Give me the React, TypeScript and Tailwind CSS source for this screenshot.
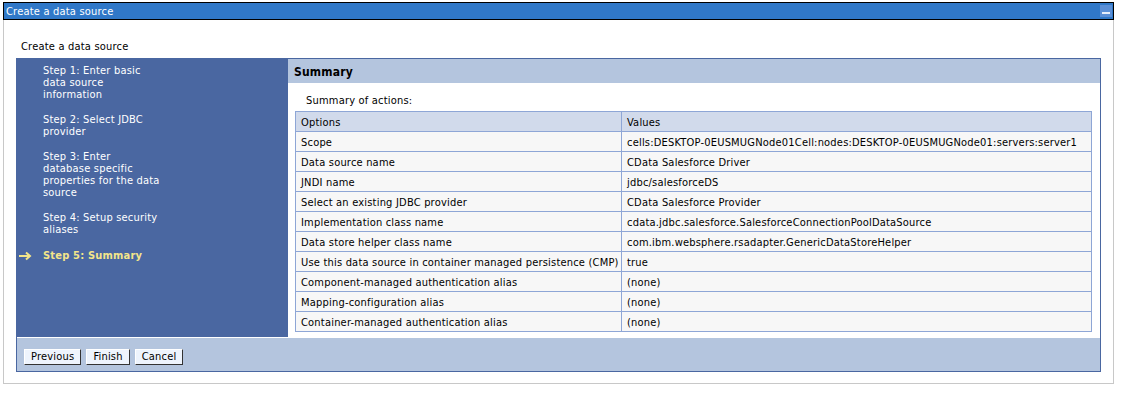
import React from "react";

const rows: [string, string][] = [
  ["Scope", "cells:DESKTOP-0EUSMUGNode01Cell:nodes:DESKTOP-0EUSMUGNode01:servers:server1"],
  ["Data source name", "CData Salesforce Driver"],
  ["JNDI name", "jdbc/salesforceDS"],
  ["Select an existing JDBC provider", "CData Salesforce Provider"],
  ["Implementation class name", "cdata.jdbc.salesforce.SalesforceConnectionPoolDataSource"],
  ["Data store helper class name", "com.ibm.websphere.rsadapter.GenericDataStoreHelper"],
  ["Use this data source in container managed persistence (CMP)", "true"],
  ["Component-managed authentication alias", "(none)"],
  ["Mapping-configuration alias", "(none)"],
  ["Container-managed authentication alias", "(none)"],
];

const steps: string[][] = [
  ["Step 1: Enter basic", "data source", "information"],
  ["Step 2: Select JDBC", "provider"],
  ["Step 3: Enter", "database specific", "properties for the data", "source"],
  ["Step 4: Setup security", "aliases"],
];

function Btn({ label }: { label: string }) {
  return (
    <button className="h-[16px] px-[6px] bg-[#eef4fd] text-[11px] leading-[14px] tracking-[0.2px] text-black border border-t-white border-l-white border-b-[#333] border-r-[#333]">
      {label}
    </button>
  );
}

export default function App() {
  return (
    <div
      className="w-[1123px] h-[395px] bg-white text-black text-[11px] tracking-[0.2px]"
      style={{ fontFamily: '"DejaVu Sans Condensed", "DejaVu Sans", sans-serif' }}
    >
      <div className="pt-[2px] pl-[3px] w-[1114px]">
        <div className="h-[18px] border border-black bg-[#3078c8] flex items-center justify-between">
          <span className="text-white text-[11px] leading-[14px] pl-[2px] pt-[2px]">Create a data source</span>
          <div className="w-[12px] h-[12px] bg-[#5b8fd6] mr-[1px] flex items-end justify-center pb-[3px]">
            <div className="w-[8px] h-[2px] bg-[#e8eefa]" />
          </div>
        </div>
        <div className="border-l border-r border-b border-[#c8c8c8] h-[364px] pt-[20px]">
          <div className="pl-[17px] leading-[13px] h-[18px]">Create a data source</div>
          <div className="ml-[12px] w-[1085px] border border-[#4a67a1] flex flex-col">
            <div className="flex h-[278px]">
              <div className="w-[271px] bg-[#4a67a1] pt-[6px] text-white">
                {steps.map((s, i) => (
                  <div key={i} className="pl-[26px] mb-[13px] leading-[12px] whitespace-nowrap">
                    {s.map((l, j) => (
                      <div key={j}>{l}</div>
                    ))}
                  </div>
                ))}
                <div className="flex items-center leading-[12px] pt-[1px]">
                  <span className="w-[26px] pl-[1px] text-[#f3e58a]">
                    <svg width="14" height="10" viewBox="0 0 14 10">
                      <path d="M1 5 H12 M8 1.5 L12 5 L8 8.5" stroke="#f3e58a" strokeWidth="2" fill="none" />
                    </svg>
                  </span>
                  <span className="font-bold text-[#f3e58a]">Step 5: Summary</span>
                </div>
              </div>
              <div className="flex-1 bg-white flex flex-col">
                <div className="h-[24px] bg-[#b4c5de] pl-[6px] pt-[2px] flex items-center font-bold text-[12px]">Summary</div>
                <div className="pl-[18px] pt-[12px] h-[28px] leading-[12px]">Summary of actions:</div>
                <div className="pl-[7px] pr-[8px]">
                  <table className="w-full border-collapse border border-[#8ea6d6]">
                    <thead>
                      <tr className="bg-[#d1daeb] h-[20px]">
                        <th className="border border-[#8ea6d6] text-left font-normal pl-[5px] pt-[2px] w-[326px] leading-[12px]">Options</th>
                        <th className="border border-[#8ea6d6] text-left font-normal pl-[5px] pt-[2px] leading-[12px]">Values</th>
                      </tr>
                    </thead>
                    <tbody>
                      {rows.map(([a, b]) => (
                        <tr key={a} className="bg-[#f7f7f7] h-[20px]">
                          <td className="border border-[#8ea6d6] pl-[5px] pt-[2px] leading-[12px] whitespace-nowrap">{a}</td>
                          <td className="border border-[#8ea6d6] pl-[5px] pt-[2px] leading-[12px] whitespace-nowrap">{b}</td>
                        </tr>
                      ))}
                    </tbody>
                  </table>
                </div>
              </div>
            </div>
            <div className="h-[1px] bg-white" />
            <div className="h-[33px] bg-[#b4c5de] flex items-start gap-[5px] pl-[7px] pt-[11px]">
              <Btn label="Previous" />
              <Btn label="Finish" />
              <Btn label="Cancel" />
            </div>
          </div>
        </div>
      </div>
    </div>
  );
}
